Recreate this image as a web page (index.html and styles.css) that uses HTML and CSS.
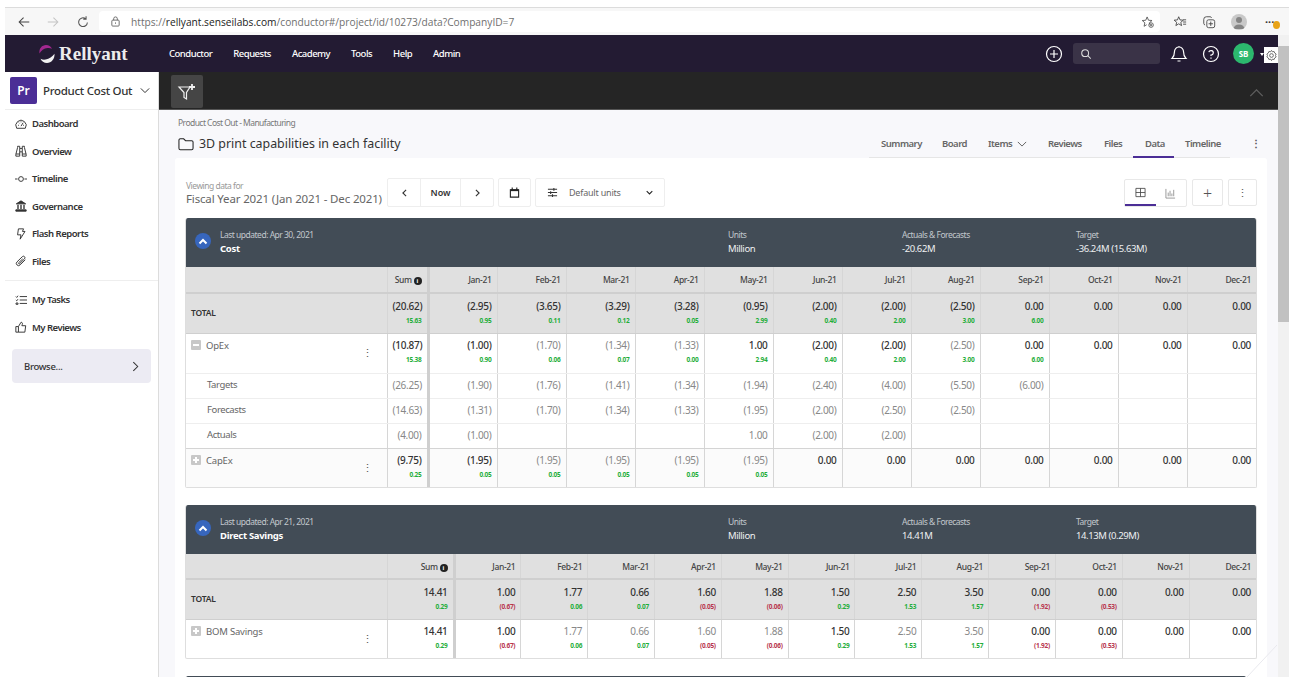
FILE: index.html
```html
<!DOCTYPE html>
<html lang="en">
<head>
<meta charset="utf-8">
<title>Rellyant</title>
<link rel="stylesheet" href="styles.css">
</head>
<body>
<div class="window">
  <div class="topstrip"></div>
  <header class="chrome">
    <svg class="ci back" viewBox="0 0 16 16"><path d="M14 8H2.500M7.500 3 2.500 8l5 5"/></svg>
    <svg class="ci fwd" viewBox="0 0 16 16"><path d="M2 8h11.500M8.500 3l5 5-5 5"/></svg>
    <svg class="ci reload" viewBox="0 0 16 16"><path d="M13 8.500A5 5 0 1 1 11 4.200M11.500 1.500v3.200H8.300"/></svg>
    <div class="urlbar">
      <svg class="ci lock" viewBox="0 0 12 12"><rect x="2" y="4.500" width="8" height="6.500" rx="1"/><path d="M4 4.500V3a2 2 0 0 1 4 0v1.500M6 7v1.500"/></svg>
      <span class="url">https://<b>rellyant.senseilabs.com</b>/conductor#/project/id/10273/data?CompanyID=7</span>
      <svg class="ci star" viewBox="0 0 16 16"><path d="M7 2.200 8.600 6l4 .3-3 2.600.5 2M7 2.200 5.400 6l-4 .3 3 2.600-.9 4 3-1.800"/><circle cx="11.500" cy="11.500" r="2.600"/><path d="M10.200 11.500h2.600M11.500 10.200v2.600"/></svg>
    </div>
    <svg class="ci fav" viewBox="0 0 16 16"><path d="M6.500 2 8 5.600l3.800.3-2.900 2.500.9 3.700-3.300-2-3.200 2 .9-3.700L1.300 5.900l3.800-.3zM11.500 8h3.500M11.500 10.500h3.500M11.500 5.500h3.500"/></svg>
    <svg class="ci coll" viewBox="0 0 16 16"><rect x="5.500" y="5.500" width="9" height="9" rx="2"/><path d="M10 7.500v5M7.500 10h5M11 3.200A2 2 0 0 0 9.300 2H5a3 3 0 0 0-3 3v4.500A2 2 0 0 0 3.500 11.400"/></svg>
    <span class="avatar"><svg viewBox="0 0 16 16"><circle cx="8" cy="6" r="3" /><path d="M2.500 15a5.500 4.500 0 0 1 11 0z"/></svg></span>
    <span class="more">···<i class="orange"></i></span>
  </header>
  <div class="frame">
    <div class="app">
      <nav class="nav">
        <div class="logo">
          <svg class="logomark" viewBox="0 0 18 20"><path class="lg-top" d="M1.500 9.500C.8 4.500 4 1 8 1c2.800 0 5 1.300 6 3.800-1.500-.8-3-1-4.500-.8C6 4.300 3 6.500 1.500 9.500z"/><path class="lg-bot" d="M16.500 9.800c.3 5.200-3 9.200-7.500 9.200-3 0-5.500-1.700-6.500-4.300 1.700.9 3.500 1.100 5.200.8 3.500-.6 6.700-2.800 8.800-5.700z"/></svg>
          <span class="wordmark">Rellyant</span>
        </div>
        <ul class="menu">
          <li>Conductor</li><li>Requests</li><li>Academy</li><li>Tools</li><li>Help</li><li>Admin</li>
        </ul>
        <div class="navright">
          <svg class="ni" viewBox="0 0 18 18"><circle cx="9" cy="9" r="7.500"/><path d="M9 5v8M5 9h8"/></svg>
          <div class="search"><svg class="ni small" viewBox="0 0 14 14"><circle cx="6" cy="6" r="4"/><path d="m9 9 3.500 3.500"/></svg></div>
          <svg class="ni bell" viewBox="0 0 18 18"><path d="M9 2a4.500 4.500 0 0 0-4.500 4.500c0 4-1 5.500-2.500 7h14c-1.500-1.500-2.500-3-2.500-7A4.500 4.500 0 0 0 9 2zM9 1v1M7.500 16h3"/></svg>
          <svg class="ni help" viewBox="0 0 18 18"><circle cx="9" cy="9" r="7.500"/><path d="M6.800 7.200A2.300 2.200 0 1 1 9 10v1M9 12.500v1.300"/></svg>
          <span class="sb">SB</span>
        </div>
      </nav>
      <div class="gear"><svg viewBox="0 0 14 14"><circle cx="7" cy="7" r="2"/><path d="m7 1.500 1 1.500 1.800-.3.700 1.700 1.500 1L11.300 7l.7 1.600-1.500 1-.7 1.700L8 10.900 7 12.500l-1-1.600-1.800.4-.7-1.700-1.500-1L2.700 7 2 5.400l1.500-1 .7-1.700L6 3z"/></svg></div>
      <div class="body">
        <aside class="side">
          <div class="project">
            <span class="badge">Pr</span>
            <span class="pname">Product Cost Out</span>
            <svg class="pchev" viewBox="0 0 12 8"><path d="m1 1.500 5 5 5-5"/></svg>
          </div>
          <ul class="links">
            <li><svg viewBox="0 0 14 14"><path d="M2 12h10a6 6 0 1 0-10 0z"/><path d="m7 9.500 2.500-4M3.500 8.500h1M9.500 8.500h1M7 4v1M4.500 5.500l.7.700"/></svg>Dashboard</li>
            <li><svg viewBox="0 0 14 14"><path d="M3 3V1.500h2.500V4h3V1.500H11V3l2 8v2H8.500V8h-3v5H1v-2z"/><path d="M1 10.500h4.500M8.500 10.500H13M5.500 4v4M8.500 4v4"/></svg>Overview</li>
            <li><svg viewBox="0 0 14 14"><circle cx="7" cy="7" r="2.800"/><path d="M0 7h3M11 7h3"/></svg>Timeline</li>
            <li><svg viewBox="0 0 14 14"><path class="fillit" d="M7 1 1.500 4.500h11zM1 11.500h12V13H1z"/><path stroke-width="1.600" d="M3.500 5.500v5M7 5.500v5M10.500 5.500v5"/></svg>Governance</li>
            <li><svg viewBox="0 0 14 14"><path d="M4 1h6L8.700 4h3L6 13l1-5H3z"/></svg>Flash Reports</li>
            <li><svg viewBox="0 0 14 14"><path d="M12 5.500 6 11.500a2.500 2.500 0 0 1-3.800-3.300L8.500 2a1.800 1.800 0 0 1 2.600 2.500L5.500 10a.7.700 0 0 1-1.200-1L9 4.500"/></svg>Files</li>
          </ul>
          <ul class="links second">
            <li><svg viewBox="0 0 14 14"><path d="M5.500 3H14M5.500 7H14M5.500 11H14M1 3l1 1 1.500-2M1 7l1 1 1.500-2M1.200 10.500h2.300v1.500H1.200z"/></svg>My Tasks</li>
            <li><svg viewBox="0 0 14 14"><path d="M1 6.500h3V13H1zM4 6.500 7 1.500c1.500 0 2 1 1.500 2.500L8 5.500h4.500l-1 7.500H4"/></svg>My Reviews</li>
          </ul>
          <div class="browse"><span>Browse...</span><svg viewBox="0 0 8 12"><path d="m1.500 1 5 5-5 5"/></svg></div>
        </aside>
        <div class="main">
          <div class="filterbar">
            <div class="filterbtn"><svg viewBox="0 0 20 20"><path d="M2 5h11L9.500 10.500V17l-2.500-1.500v-5z"/><path class="plus" d="M15 2v6M12 5h6"/></svg></div>
            <svg class="collapse" viewBox="0 0 16 9"><path d="m1 8 7-7 7 7"/></svg>
          </div>
          <div class="content">
            <div class="crumb">Product Cost Out - Manufacturing</div>
            <div class="titlerow">
              <h1 class="title"><svg viewBox="0 0 17 14"><path d="M1 3a1.500 1.500 0 0 1 1.500-1.500h3.500L8 3.500h6.500A1.500 1.500 0 0 1 16 5v6.500a1.500 1.500 0 0 1-1.500 1.500h-12A1.500 1.500 0 0 1 1 11.500z"/></svg>3D print capabilities in each facility</h1>
              <div class="tabs">
                <span class="tab t1">Summary</span><span class="tab t2">Board</span><span class="tab t3">Items <svg viewBox="0 0 12 7"><path d="m1 1 5 5 5-5"/></svg></span><span class="tab t4">Reviews</span><span class="tab t5">Files</span><span class="tab active">Data</span><span class="tab t7">Timeline</span><span class="tabkebab">⋮</span>
              </div>
            </div>
            <section class="panel">
              <div class="toolbar">
                <div class="viewing"><small>Viewing data for</small><span>Fiscal Year 2021 (Jan 2021 - Dec 2021)</span></div>
                <div class="btngroup">
                  <span class="seg s1"><svg viewBox="0 0 6 10"><path d="M5 1 1 5l4 4"/></svg></span><span class="seg s2">Now</span><span class="seg s3"><svg viewBox="0 0 6 10"><path d="m1 1 4 4-4 4"/></svg></span>
                </div>
                <span class="cal"><svg viewBox="0 0 12 12"><path d="M1.500 3h9v8h-9zM3.500 .5v2M8.500 .5v2"/><path stroke-width="2" d="M1.500 3.500h9"/></svg></span>
                <span class="units"><svg class="sliders" viewBox="0 0 12 12"><path d="M1 2.500h10M1 6h10M1 9.500h10M7.500 1v3M4 4.500v3M6 8v3"/></svg><span>Default units</span><svg class="uchev" viewBox="0 0 10 6"><path d="m1 1 4 4 4-4"/></svg></span>
                <div class="tools">
                  <div class="toggle"><span class="tg on"><svg viewBox="0 0 12 12"><path d="M1 1.500h10v9H1zM1 6h10M6 1.500v9"/></svg></span><span class="tg"><svg viewBox="0 0 12 12"><path d="M1 1v10h10M3.500 9V5M5.500 9V3M7.500 9V6M9.500 9V2"/></svg></span></div>
                  <span class="toolbtn plusbtn">+</span>
                  <span class="toolbtn kebabbtn">⋮</span>
                </div>
              </div>

              <article class="card">
                <div class="cardhead">
                  <div class="chleft">
                    <span class="up"><svg viewBox="0 0 10 7"><path d="m1.500 5.500 3.500-3.500 3.500 3.500"/></svg></span>
                    <div><small>Last updated: Apr 30, 2021</small><strong>Cost</strong></div>
                  </div>
                  <div class="chcol"><small>Units</small><span>Million</span></div>
                  <div class="chcol"><small>Actuals &amp; Forecasts</small><span>-20.62M</span></div>
                  <div class="chcol"><small>Target</small><span>-36.24M (15.63M)</span></div>
                </div>
                <table class="grid cost">
                  <colgroup><col class="c-label"><col class="c-sum"><col span="12"></colgroup>
                  <tr class="rh"><th></th><th class="sum">Sum <i class="info">i</i></th><th>Jan-21</th><th>Feb-21</th><th>Mar-21</th><th>Apr-21</th><th>May-21</th><th>Jun-21</th><th>Jul-21</th><th>Aug-21</th><th>Sep-21</th><th>Oct-21</th><th>Nov-21</th><th>Dec-21</th></tr>
                  <tr class="rt"><td class="lab total">TOTAL</td>
                    <td class="sum"><b>(20.62)</b><em class="g">15.63</em></td><td><b>(2.95)</b><em class="g">0.95</em></td><td><b>(3.65)</b><em class="g">0.11</em></td><td><b>(3.29)</b><em class="g">0.12</em></td><td><b>(3.28)</b><em class="g">0.05</em></td><td><b>(0.95)</b><em class="g">2.99</em></td><td><b>(2.00)</b><em class="g">0.40</em></td><td><b>(2.00)</b><em class="g">2.00</em></td><td><b>(2.50)</b><em class="g">3.00</em></td><td><b>0.00</b><em class="g">6.00</em></td><td><b>0.00</b></td><td><b>0.00</b></td><td><b>0.00</b></td></tr>
                  <tr class="rg"><td class="lab"><div class="labin"><span class="tree minus"></span>OpEx<span class="rk">⋮</span></div></td>
                    <td class="sum"><b>(10.87)</b><em class="g">15.38</em></td><td><b>(1.00)</b><em class="g">0.90</em></td><td><u>(1.70)</u><em class="g">0.06</em></td><td><u>(1.34)</u><em class="g">0.07</em></td><td><u>(1.33)</u><em class="g">0.00</em></td><td><b>1.00</b><em class="g">2.94</em></td><td><b>(2.00)</b><em class="g">0.40</em></td><td><b>(2.00)</b><em class="g">2.00</em></td><td><u>(2.50)</u><em class="g">3.00</em></td><td><b>0.00</b><em class="g">6.00</em></td><td><b>0.00</b></td><td><b>0.00</b></td><td><b>0.00</b></td></tr>
                  <tr class="rs"><td class="lab sub">Targets</td><td class="sum"><u>(26.25)</u></td><td><u>(1.90)</u></td><td><u>(1.76)</u></td><td><u>(1.41)</u></td><td><u>(1.34)</u></td><td><u>(1.94)</u></td><td><u>(2.40)</u></td><td><u>(4.00)</u></td><td><u>(5.50)</u></td><td><u>(6.00)</u></td><td></td><td></td><td></td></tr>
                  <tr class="rs"><td class="lab sub">Forecasts</td><td class="sum"><u>(14.63)</u></td><td><u>(1.31)</u></td><td><u>(1.70)</u></td><td><u>(1.34)</u></td><td><u>(1.33)</u></td><td><u>(1.95)</u></td><td><u>(2.00)</u></td><td><u>(2.50)</u></td><td><u>(2.50)</u></td><td></td><td></td><td></td><td></td></tr>
                  <tr class="rs last"><td class="lab sub">Actuals</td><td class="sum"><u>(4.00)</u></td><td><u>(1.00)</u></td><td></td><td></td><td></td><td><u>1.00</u></td><td><u>(2.00)</u></td><td><u>(2.00)</u></td><td></td><td></td><td></td><td></td><td></td></tr>
                  <tr class="rg soft"><td class="lab"><div class="labin"><span class="tree plusbox"></span>CapEx<span class="rk">⋮</span></div></td>
                    <td class="sum"><b>(9.75)</b><em class="g">0.25</em></td><td><b>(1.95)</b><em class="g">0.05</em></td><td><u>(1.95)</u><em class="g">0.05</em></td><td><u>(1.95)</u><em class="g">0.05</em></td><td><u>(1.95)</u><em class="g">0.05</em></td><td><u>(1.95)</u><em class="g">0.05</em></td><td><b>0.00</b></td><td><b>0.00</b></td><td><b>0.00</b></td><td><b>0.00</b></td><td><b>0.00</b></td><td><b>0.00</b></td><td><b>0.00</b></td></tr>
                </table>
              </article>

              <article class="card">
                <div class="cardhead">
                  <div class="chleft">
                    <span class="up"><svg viewBox="0 0 10 7"><path d="m1.500 5.500 3.500-3.500 3.500 3.500"/></svg></span>
                    <div><small>Last updated: Apr 21, 2021</small><strong>Direct Savings</strong></div>
                  </div>
                  <div class="chcol"><small>Units</small><span>Million</span></div>
                  <div class="chcol"><small>Actuals &amp; Forecasts</small><span>14.41M</span></div>
                  <div class="chcol"><small>Target</small><span>14.13M (0.29M)</span></div>
                </div>
                <table class="grid savings">
                  <colgroup><col class="c-label"><col class="c-sum2"><col span="12"></colgroup>
                  <tr class="rh"><th></th><th class="sum">Sum <i class="info">i</i></th><th>Jan-21</th><th>Feb-21</th><th>Mar-21</th><th>Apr-21</th><th>May-21</th><th>Jun-21</th><th>Jul-21</th><th>Aug-21</th><th>Sep-21</th><th>Oct-21</th><th>Nov-21</th><th>Dec-21</th></tr>
                  <tr class="rt"><td class="lab total">TOTAL</td>
                    <td class="sum"><b>14.41</b><em class="g">0.29</em></td><td><b>1.00</b><em class="r">(0.67)</em></td><td><b>1.77</b><em class="g">0.06</em></td><td><b>0.66</b><em class="g">0.07</em></td><td><b>1.60</b><em class="r">(0.05)</em></td><td><b>1.88</b><em class="r">(0.06)</em></td><td><b>1.50</b><em class="g">0.29</em></td><td><b>2.50</b><em class="g">1.53</em></td><td><b>3.50</b><em class="g">1.57</em></td><td><b>0.00</b><em class="r">(1.92)</em></td><td><b>0.00</b><em class="r">(0.53)</em></td><td><b>0.00</b></td><td><b>0.00</b></td></tr>
                  <tr class="rg"><td class="lab"><div class="labin"><span class="tree plusbox"></span>BOM Savings<span class="rk">⋮</span></div></td>
                    <td class="sum"><b>14.41</b><em class="g">0.29</em></td><td><b>1.00</b><em class="r">(0.67)</em></td><td><u>1.77</u><em class="g">0.06</em></td><td><u>0.66</u><em class="g">0.07</em></td><td><u>1.60</u><em class="r">(0.05)</em></td><td><u>1.88</u><em class="r">(0.06)</em></td><td><b>1.50</b><em class="g">0.29</em></td><td><u>2.50</u><em class="g">1.53</em></td><td><u>3.50</u><em class="g">1.57</em></td><td><b>0.00</b><em class="r">(1.92)</em></td><td><b>0.00</b><em class="r">(0.53)</em></td><td><b>0.00</b></td><td><b>0.00</b></td></tr>
                </table>
              </article>
              <article class="card nextcard"><div class="cardhead"></div></article>
            </section>
          </div>
        </div>
      </div>
      <svg class="fold" viewBox="0 0 32 32"><path d="M1 32 31 0"/></svg>
    </div>
    <div class="scrollbar"><span class="sb-arrow"></span><span class="thumb"></span></div>
  </div>
</div>
</body>
</html>
```

FILE: styles.css
```css
* { box-sizing: border-box; }
html, body { margin: 0; height: 684px; overflow: hidden; background: #fff; }
body { font-family: "Noto Sans", "Open Sans", sans-serif; color: #333; }
ul { list-style: none; margin: 0; padding: 0; }
svg { fill: none; stroke: currentColor; stroke-width: 1.2; flex: none; display: block; }

.window { margin-left: 5px; width: 1284px; height: 677px; overflow: hidden; display: flex; flex-direction: column; }
.topstrip { height: 8px; background: #fff; border-bottom: 1px solid #dcdcdc; flex: none; }

/* Browser chrome */
.chrome { height: 27px; background: #f7f7f7; display: flex; align-items: center; flex: none; color: #444; position: relative; }
.ci { width: 14px; height: 14px; }
.back { margin-left: 12px; }
.fwd { margin-left: 15px; color: #c4c4c4; }
.reload { margin-left: 16px; color: #555; }
.urlbar { margin-left: 9px; width: 1061px; height: 21px; background: #fff; border-radius: 4px; display: flex; align-items: center; }
.lock { width: 11px; height: 11px; margin-left: 11px; color: #666; stroke-width: 1; }
.url { margin-left: 10px; font-size: 10.2px; color: #6f6f6f; flex: 1; white-space: nowrap; font-family: "Open Sans", sans-serif; }
.url b { font-weight: 400; color: #222; }
.star { margin-right: 5px; color: #555; stroke-width: 1; }
.fav { margin-left: 13px; stroke-width: 1; }
.coll { margin-left: 15px; stroke-width: 1; }
.avatar { margin-left: 15px; width: 16px; height: 16px; border-radius: 50%; background: #c9c9c9; overflow: hidden; }
.avatar svg { width: 16px; height: 16px; fill: #858585; stroke: none; }
.more { margin-left: 18px; font-size: 11px; font-weight: 700; color: #333; position: relative; line-height: 8px; }
.orange { position: absolute; left: 8px; top: 3px; width: 7px; height: 8px; border-radius: 50%; background: #e8a317; }

/* Frame */
.frame { flex: 1; display: flex; min-height: 0; position: relative; }
.app { width: 1273px; display: flex; flex-direction: column; position: relative; }
.scrollbar { width: 11px; background: #f1f1f1; position: relative; display: flex; flex-direction: column; }
.sb-arrow { height: 11px; }
.thumb { height: 276px; background: #c1c1c1; }
.fold { position: absolute; right: 0; bottom: 0; width: 32px; height: 32px; color: #e9e9ee; stroke-width: 1; }

/* Nav */
.nav { height: 37px; background: #231b33; display: flex; align-items: center; color: #fff; flex: none; }
.logo { width: 164px; display: flex; align-items: center; padding-left: 33px; gap: 3px; }
.logomark { width: 18px; height: 20px; stroke: none; }
.lg-top { fill: #a2288f; }
.lg-bot { fill: #f2f2f2; }
.wordmark { font-family: "Liberation Serif", serif; font-size: 19px; font-weight: 700; color: #ececec; }
.menu { display: flex; font-size: 9.5px; font-weight: 500; letter-spacing: -.5px; }
.menu li { margin-right: 21px; white-space: nowrap; }
.navright { margin-left: auto; display: flex; align-items: center; }
.ni { width: 18px; height: 18px; }
.search { width: 87px; height: 21px; background: #3a3347; border-radius: 3px; margin-left: 10px; display: flex; align-items: center; padding-left: 7px; }
.ni.small { width: 12px; height: 12px; color: #ddd; }
.bell { margin-left: 10px; }
.help { margin-left: 14px; }
.sb { margin: 0 24px 0 13px; width: 21px; height: 21px; border-radius: 50%; background: #2cb86e; font-size: 8px; font-weight: 700; display: flex; align-items: center; justify-content: center; }
.gear { position: absolute; right: 0; top: 12px; width: 14px; height: 16px; background: #fff; color: #555; display: flex; align-items: center; justify-content: center; }
.gear::before { content: ""; position: absolute; left: -4px; top: 6px; border: 3px solid transparent; border-top-color: #fff; border-left-width: 2px; border-right-width: 2px; }
.gear svg { width: 13px; height: 13px; stroke-width: .9; }

/* Body */
.body { flex: 1; display: flex; min-height: 0; }
.side { width: 154px; flex: none; background: #fff; border-right: 1px solid #dcdcdc; }
.project { height: 38px; display: flex; align-items: center; padding-left: 5px; border-bottom: 1px solid #eee; }
.badge { width: 27px; height: 27px; background: #4b2e96; color: #fff; border-radius: 2px; font-size: 12px; font-weight: 600; display: flex; align-items: center; justify-content: center; }
.pname { margin-left: 6px; font-size: 11.5px; font-weight: 500; color: #333; white-space: nowrap; letter-spacing: -.3px; }
.pchev { width: 10px; height: 7px; margin-left: 8px; }
.links { padding: 0 0 5px; border-bottom: 1px solid #eee; }
.links li { height: 27.5px; display: flex; align-items: center; gap: 5px; padding-left: 10px; font-size: 9.5px; font-weight: 600; color: #333; letter-spacing: -.5px; }
.links li svg { width: 12px; height: 12px; stroke-width: 1.1; }
.links.second { border: 0; padding-top: 5px; padding-bottom: 8px; }
.fillit { fill: currentColor; }
.browse { margin-left: 7px; width: 139px; height: 34px; background: #ecebf3; border-radius: 4px; display: flex; align-items: center; justify-content: space-between; padding: 0 12px; font-size: 9.5px; font-weight: 500; color: #333; letter-spacing: -.3px; }
.browse svg { width: 7px; height: 11px; }

.main { flex: 1; min-width: 0; display: flex; flex-direction: column; }
.filterbar { height: 38px; background: #252525; display: flex; align-items: flex-start; justify-content: space-between; flex: none; padding: 3px 14px 0 12px; border-bottom: 1px solid #555; }
.filterbtn { width: 32px; height: 33px; background: #454545; border-radius: 2px; color: #f0f0f0; display: flex; align-items: center; justify-content: center; }
.filterbtn svg { width: 20px; height: 20px; }
.plus { stroke-width: 1.8; }
.collapse { width: 15px; height: 8px; color: #5e5e5e; margin-top: 14px; stroke-width: 1.5; }

.content { flex: 1; background: #f8f8fb; padding: 7px 11px 0 16px; min-height: 0; overflow: hidden; }
.crumb { font-size: 8.5px; color: #777; height: 11px; line-height: 11px; margin-left: 3px; letter-spacing: -.55px; }
.titlerow { display: flex; align-items: flex-start; justify-content: space-between; margin-top: 5px; height: 25px; }
.title { margin: 2px 0 0 3px; font-size: 12.4px; font-weight: 400; color: #333; display: flex; align-items: center; gap: 5px; white-space: nowrap; line-height: 17px; }
.title svg { width: 16px; height: 14px; color: #222; stroke-width: 1.1; }
.tabs { display: flex; align-items: flex-start; height: 25px; margin-right: 37px; border-bottom: 1px solid #e6e6e6; font-size: 9.5px; font-weight: 600; color: #666; position: relative; padding: 2px 0 0 12px; width: 361px; letter-spacing: -.5px; }
.tab { line-height: 17px; white-space: nowrap; display: flex; align-items: center; gap: 5px; }
.tab svg { width: 10px; height: 6px; }
.t1 { width: 61px; }
.t2 { width: 46px; }
.t3 { width: 60px; }
.t4 { width: 56px; }
.t5 { width: 41px; }
.active { width: 40px; position: relative; }
.active::after { content: ""; position: absolute; left: -12px; width: 41px; top: 21px; height: 2px; background: #4b2e96; }
.t7 { width: 40px; }
.tabkebab { position: absolute; right: -30px; top: 2px; font-size: 10px; line-height: 17px; color: #555; }

.panel { background: #fff; border-radius: 3px; padding: 20px 10px 0; width: 1092px; height: 600px; }
.toolbar { display: flex; height: 40px; align-items: flex-start; font-size: 9.5px; }
.viewing { width: 202px; padding-left: 1px; margin-top: 2px; }
.viewing small { display: block; font-size: 8.5px; color: #999; line-height: 11px; letter-spacing: -.5px; }
.viewing span { display: block; font-size: 11.5px; color: #666; line-height: 16px; white-space: nowrap; letter-spacing: -.15px; }
.btngroup { display: flex; height: 29px; border: 1px solid #eee; border-radius: 2px; }
.seg { display: flex; align-items: center; justify-content: center; border-right: 1px solid #eee; color: #333; font-weight: 600; font-size: 9px; }
.seg svg { width: 5px; height: 8px; stroke-width: 1.4; }
.s1 { width: 33px; }
.s2 { width: 40px; }
.s3 { width: 32px; border-right: 0; }
.cal { margin-left: 4px; width: 33px; height: 29px; border: 1px solid #eee; border-radius: 2px; display: flex; align-items: center; justify-content: center; color: #222; }
.cal svg { width: 11px; height: 11px; stroke-width: 1.2; }
.units { margin-left: 4px; width: 130px; height: 29px; border: 1px solid #eee; border-radius: 2px; display: flex; align-items: center; padding: 0 11px; color: #666; font-size: 9px; letter-spacing: -.2px; }
.units span { margin-left: 11px; flex: 1; }
.sliders { width: 11px; height: 11px; color: #333; }
.uchev { width: 7px; height: 5px; color: #222; stroke-width: 1.5; }
.tools { margin-left: auto; display: flex; gap: 5px; height: 28px; margin-top: 1px; }
.toggle { display: flex; width: 63px; height: 28px; border: 1px solid #e8e8e8; border-radius: 2px; }
.tg { width: 31px; display: flex; align-items: center; justify-content: center; color: #888; }
.tg svg { width: 11px; height: 11px; stroke-width: .9; }
.tg.on { color: #444; border-bottom: 2px solid #4b2e96; }
.toolbtn { border: 1px solid #e8e8e8; border-radius: 2px; display: flex; align-items: center; justify-content: center; color: #555; height: 27px; }
.plusbtn { width: 31px; font-size: 16px; font-weight: 300; }
.kebabbtn { width: 29px; font-size: 11px; }

.card { border-radius: 3px 3px 2px 2px; overflow: hidden; margin-bottom: 17px; border: 1px solid #dedede; border-top: 0; }
.cardhead { height: 49px; background: #424c56; display: flex; color: #fff; padding-top: 11px; }
.chleft { width: 542px; display: flex; padding-left: 9px; gap: 9px; }
.up { width: 16px; height: 16px; border-radius: 50%; background: #3766bd; color: #fff; margin-top: 4px; display: flex; align-items: center; justify-content: center; }
.up svg { width: 10px; height: 7px; stroke-width: 2; }
.cardhead small { display: block; font-size: 8.5px; color: #c3c8cd; line-height: 11px; letter-spacing: -.5px; }
.cardhead strong { display: block; font-size: 9.5px; line-height: 17px; font-weight: 700; letter-spacing: -.3px; }
.chcol { width: 174px; }
.chcol span { display: block; font-size: 9.5px; line-height: 17px; color: #eef0f2; letter-spacing: -.4px; }
.nextcard { margin: 0; width: 1062px; }

.grid { width: 100%; border-collapse: collapse; table-layout: fixed; }
.c-label { width: 201px; }
.c-sum { width: 41px; }
.c-sum2 { width: 67px; }
.grid th, .grid td { padding: 0 5px; border-left: 1px solid #d6d6d6; text-align: right; vertical-align: top; }
.grid th:first-child, .grid td:first-child { border-left: 0; }
.grid .sum { border-right: 3px solid #cfcfcf; }
.grid th { height: 26px; background: #e0e0e0; border-bottom: 2px solid #cfcfcf; font-size: 8.5px; font-weight: 500; color: #444; vertical-align: middle; white-space: nowrap; letter-spacing: -.35px; }
.savings .rh th { height: 25px; }
.info { display: inline-block; width: 8px; height: 8px; line-height: 8px; border-radius: 50%; background: #222; color: #fff; font-size: 6px; font-style: normal; text-align: center; font-weight: 700; letter-spacing: 0; }
.rt td { height: 40px; background: #e0e0e0; border-bottom: 1px solid #cfcfcf; padding-top: 5px; }
.rg td { height: 40px; padding-top: 4px; }
.savings .rg td, .rg.soft td { height: 39px; }
.rg.soft td { background: #fbfbfb; }
.rg td, .rs td { border-bottom: 1px solid #eee; }
.rs td { height: 25px; vertical-align: middle; padding-bottom: 2px; }
.rs.last td { border-bottom-color: #d4d4d4; }
.grid tr:last-child td { border-bottom: 0; }
.grid b, .grid u, .grid em { display: block; text-decoration: none; font-style: normal; white-space: nowrap; }
.grid b { font-size: 10px; font-weight: 500; color: #333; line-height: 14px; letter-spacing: -.3px; }
.grid u { font-size: 10px; color: #888; line-height: 14px; letter-spacing: -.3px; }
.grid em { font-size: 6.5px; font-weight: 700; line-height: 12px; margin-top: 2px; letter-spacing: -.25px; }
.g { color: #1fae3a; }
.r { color: #b8354e; }
.grid .lab { text-align: left; font-size: 9.5px; color: #666; padding: 0; }
.grid .lab.sub { padding-bottom: 2px; }
.rt .total { font-size: 8.5px; font-weight: 600; color: #333; padding: 0 0 2px 5px; vertical-align: middle; letter-spacing: -.2px; }
.labin { display: flex; align-items: flex-start; padding: 6px 0 0 5px; gap: 5px; position: relative; line-height: 12px; color: #666; font-size: 9.5px; letter-spacing: -.2px; }
.rs .sub { padding-left: 21px; letter-spacing: -.4px; }
.tree { width: 10px; height: 10px; background: #c8c8c8; border-radius: 1px; position: relative; flex: none; }
.tree::before { content: ""; position: absolute; left: 2px; right: 2px; top: 4px; height: 2px; background: #fff; }
.plusbox::after { content: ""; position: absolute; top: 2px; bottom: 2px; left: 4px; width: 2px; background: #fff; }
.rk { position: absolute; right: 14px; top: 13px; font-size: 11px; color: #555; line-height: 12px; }
```
